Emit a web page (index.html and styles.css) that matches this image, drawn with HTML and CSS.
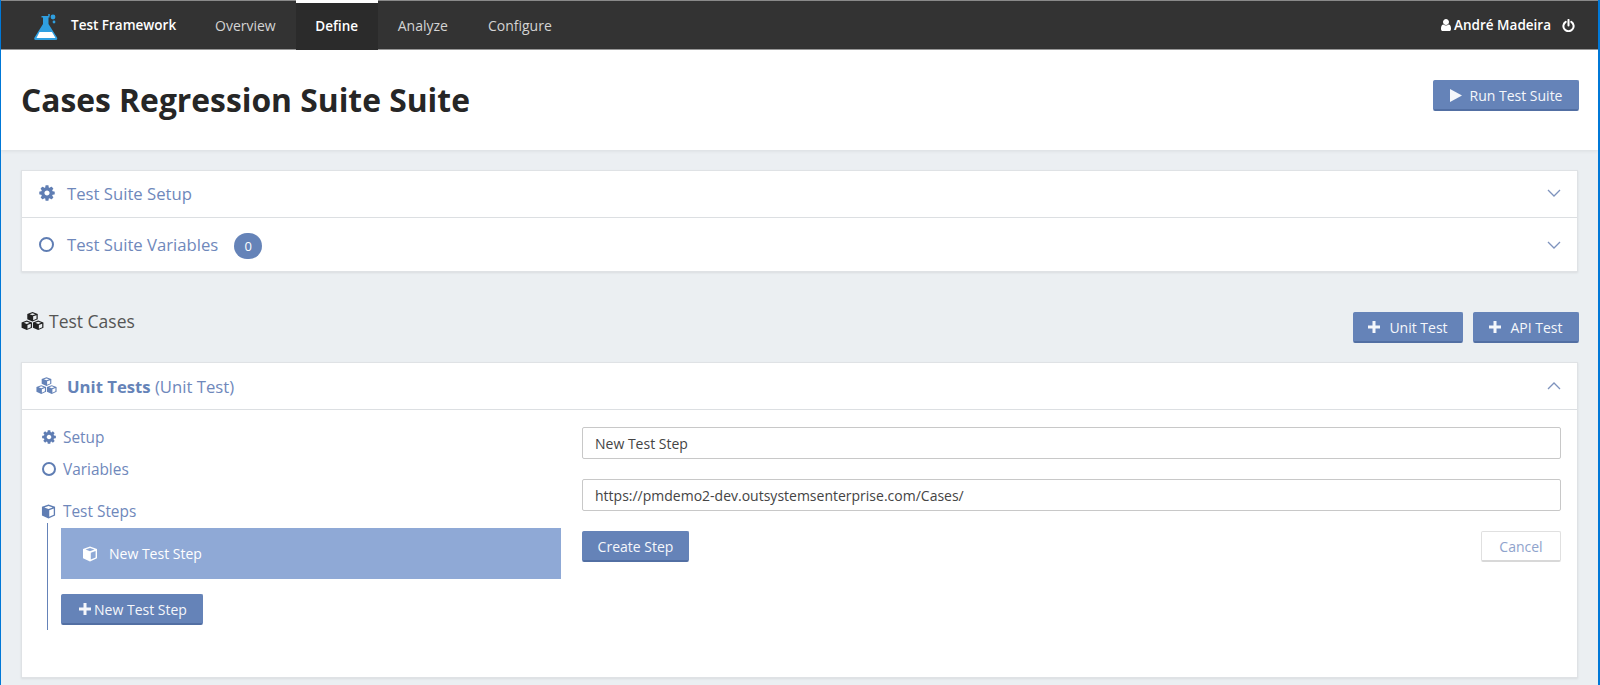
FILE: index.html
```html
<!DOCTYPE html>
<html lang="en">
<head>
<meta charset="utf-8">
<title>Cases Regression Suite Suite</title>
<link rel="stylesheet" href="styles.css">
</head>
<body>
<svg class="defs" aria-hidden="true">
  <symbol id="i-cog" viewBox="0 0 1792 1792"><path fill="currentColor" d="M1152 896q0-106-75-181t-181-75-181 75-75 181 75 181 181 75 181-75 75-181zm512-109v222q0 12-8 23t-20 13l-185 28q-19 54-39 91 35 50 107 138 10 12 10 25t-9 23q-27 37-99 108t-94 71q-12 0-26-9l-138-108q-44 23-91 38-16 136-29 186-7 28-36 28h-222q-14 0-24.500-8.500t-11.500-21.500l-28-184q-49-16-90-37l-141 107q-10 9-25 9-14 0-25-11-126-114-165-168-7-10-7-23 0-12 8-23 15-21 51-66.500t54-70.500q-27-50-41-99l-183-27q-13-2-21-12.500t-8-23.500v-222q0-12 8-23t19-13l186-28q14-46 39-92-40-57-107-138-10-12-10-24 0-10 9-23 26-36 98.500-107.500t94.500-71.500q13 0 26 10l138 107q44-23 91-38 16-136 29-186 7-28 36-28h222q14 0 24.500 8.500t11.500 21.500l28 184q49 16 90 37l142-107q9-9 24-9 13 0 25 10 129 119 165 170 7 8 7 22 0 12-8 23-15 21-51 66.500t-54 70.500q26 50 41 98l183 28q13 2 21 12.500t8 23.500z"/></symbol>
  <symbol id="i-user" viewBox="0 0 1792 1792"><path fill="currentColor" d="M1536 1399q0 109-62.500 187t-150.500 78h-854q-88 0-150.500-78t-62.500-187q0-85 8.500-160.500t31.500-151.500 58.500-130 94-88.500 134.500-34.500q131 128 313 128t313-128q76 0 134.500 34.500t94 88.500 58.500 130 31.500 151.500 8.500 160.500zm-256-887q0 159-112.500 271.500t-271.500 112.500-271.500-112.500-112.500-271.500 112.500-271.500 271.500-112.500 271.500 112.500 112.500 271.500z"/></symbol>
  <symbol id="i-cube" viewBox="0 0 16 16"><path fill="currentColor" fill-rule="evenodd" d="M8 .5 15 3v9.300L8 15.500 1 12.300V3zM8 2 3.500 3.600 8 5.300l4.500-1.700zM8.800 6.700v6.900l4.800-2.200V4.900z"/></symbol>
  <symbol id="i-cubes" viewBox="0 0 24 20"><g fill="currentColor" fill-rule="evenodd"><path d="M12 0l5.500 2v5.500L12 10 6.500 7.500V2zM12 1.300 9 2.400l3 1.100 3-1.100zM12.700 4.600v4l3.500-1.600V3.300z"/><path d="M6 9l5.500 2v5.500L6 19 .5 16.500V11zM6 10.300 3 11.400l3 1.100 3-1.100zM6.700 13.600v4l3.500-1.600v-3.700z"/><path d="M18 9l5.500 2v5.500L18 19l-5.500-2.500V11zM18 10.300l-3 1.100 3 1.100 3-1.100zM18.700 13.600v4l3.500-1.600v-3.700z"/></g></symbol>
  <symbol id="i-plus" viewBox="0 0 12 12"><path fill="currentColor" d="M4.500 0h3v4.500H12v3H7.500V12h-3V7.500H0v-3h4.500z"/></symbol>
  <symbol id="i-chev" viewBox="0 0 14 8"><path fill="none" stroke="currentColor" stroke-width="1.300" d="M1 1l6 6 6-6"/></symbol>
</svg>

<header class="topbar">
  <a class="brand">
    <svg class="logo" viewBox="0 0 24 26" aria-hidden="true">
      <circle cx="19" cy="3" r="2.400" fill="#2f9fe0"/><circle cx="20" cy="8" r="1.400" fill="#2f9fe0"/><circle cx="15" cy="1" r="1" fill="#2f9fe0"/>
      <path fill="#2f9fe0" d="M7.500 2h8v1.500h-1V10l8.500 13.500q1 2.500-1.500 2.500H2q-2.500 0-1.500-2.500L9 10V3.500H7.500z"/>
      <path fill="#fff" d="M5.500 18h12.500l3.500 6H2.500z"/>
    </svg>
    <span>Test Framework</span>
  </a>
  <nav class="nav">
    <a class="nav-item">Overview</a>
    <a class="nav-item active">Define</a>
    <a class="nav-item">Analyze</a>
    <a class="nav-item">Configure</a>
  </nav>
  <div class="account">
    <svg class="ic-user"><use href="#i-user"/></svg>
    <span>André Madeira</span>
    <svg class="ic-power" viewBox="0 0 14 14" aria-hidden="true"><path fill="none" stroke="#fff" stroke-width="2.200" stroke-linecap="round" d="M4 3a5.500 5.500 0 1 0 6 0M7 1v6"/></svg>
  </div>
</header>

<section class="titlebar">
  <h1>Cases Regression Suite Suite</h1>
  <button class="btn btn-run">
    <svg class="ic-play" viewBox="0 0 12 13" aria-hidden="true"><path fill="currentColor" d="M0 0l12 6.500L0 13z"/></svg>
    Run Test Suite
  </button>
</section>

<main class="content">
  <div class="card">
    <div class="row row-setup">
      <svg class="ic-lead"><use href="#i-cog"/></svg>
      <span class="row-title">Test Suite Setup</span>
      <svg class="chev"><use href="#i-chev"/></svg>
    </div>
    <div class="row row-vars">
      <span class="ring"></span>
      <span class="row-title">Test Suite Variables</span>
      <span class="badge">0</span>
      <svg class="chev"><use href="#i-chev"/></svg>
    </div>
  </div>

  <div class="section-head">
    <h2><svg class="ic-cubes-dark"><use href="#i-cubes"/></svg>Test Cases</h2>
    <div class="actions">
      <button class="btn btn-unit"><svg class="ic-plus"><use href="#i-plus"/></svg>Unit Test</button>
      <button class="btn btn-api"><svg class="ic-plus"><use href="#i-plus"/></svg>API Test</button>
    </div>
  </div>

  <div class="card panel">
    <div class="row row-unit">
      <svg class="ic-cubes"><use href="#i-cubes"/></svg>
      <span class="row-title"><b>Unit Tests</b> (Unit Test)</span>
      <svg class="chev up"><use href="#i-chev"/></svg>
    </div>
    <div class="panel-body">
      <aside class="side">
        <a class="side-link"><svg class="ic-side"><use href="#i-cog"/></svg>Setup</a>
        <a class="side-link"><span class="ring small"></span>Variables</a>
        <a class="side-link steps"><svg class="ic-side cube"><use href="#i-cube"/></svg>Test Steps</a>
        <div class="tree">
          <div class="step"><svg class="ic-step"><use href="#i-cube"/></svg>New Test Step</div>
          <button class="btn btn-new"><svg class="ic-plus small"><use href="#i-plus"/></svg>New Test Step</button>
        </div>
      </aside>
      <form class="form">
        <input class="field" type="text" value="New Test Step">
        <input class="field" type="text" value="https://pmdemo2-dev.outsystemsenterprise.com/Cases/">
        <div class="form-actions">
          <button class="btn btn-create" type="button">Create Step</button>
          <button class="btn-cancel" type="button">Cancel</button>
        </div>
      </form>
    </div>
  </div>
</main>
</body>
</html>
```
FILE: styles.css
```css
* { box-sizing: border-box; }
html, body { margin: 0; height: 100%; }
body {
  height: 685px;
  overflow: hidden;
  background: #ebeff2;
  border-left: 1px solid #0078d7;
  border-right: 2px solid #0078d7;
  font-family: "Open Sans", sans-serif;
  font-size: 14px;
  color: #2b2b2b;
}
.defs { width: 0; height: 0; position: absolute; }

.topbar {
  height: 50px;
  background: #333;
  border-top: 1px solid #8a8a8a;
  border-bottom: 1px solid #9a9a9a;
  display: flex;
  align-items: center;
  padding-left: 33px;
  color: #fff;
}
.brand { display: flex; align-items: center; gap: 13px; font-weight: 600; font-size: 13.500px; width: 162px; }
.logo { width: 24px; height: 26px; margin-top: 4px; }
.nav { display: flex; height: 100%; margin-left: -1px; }
.nav-item {
  display: flex;
  align-items: center;
  padding: 0 20px;
  color: #d4d4d4;
  font-size: 14px;
}
.nav-item.active {
  width: 82px;
  height: 50px;
  margin-top: -1px;
  padding: 0 0 2px;
  justify-content: center;
  background: #2b2b2b;
  border-top: 3px solid #fff;
  color: #fff;
  font-weight: 600;
  font-size: 13.500px;
}
.account { margin-left: auto; display: flex; align-items: center; font-weight: 600; font-size: 13.500px; padding-right: 23px; }
.ic-user { width: 14px; height: 14px; color: #fff; margin-right: 1px; }
.ic-power { width: 13px; height: 13px; margin-left: 11px; }

.titlebar {
  height: 100px;
  background: #fff;
  display: flex;
  align-items: flex-start;
  justify-content: space-between;
  padding: 30px 19px 0 20px;
  box-shadow: 0 1px 4px rgba(0, 0, 0, .08);
}
h1 { margin: 0; font-size: 31.800px; font-weight: 700; line-height: 40px; color: #262626; }

.btn {
  display: inline-flex;
  align-items: center;
  justify-content: center;
  height: 31px;
  background: #6583b8;
  color: #f5f7fb;
  border: 1px solid #6583b8;
  border-bottom: 2px solid #526fa3;
  border-radius: 2px;
  font-family: inherit;
  font-size: 14px;
  font-weight: 400;
  padding: 0;
}
.btn-run { width: 146px; }
.ic-play { width: 12px; height: 13px; margin-right: 8px; }

.content { padding: 20px 20px 0 20px; }
.card { background: #fff; border: 1px solid #dfe2e5; box-shadow: 0 1px 2px rgba(0, 0, 0, .08); }
.row { display: flex; align-items: center; padding: 0 16px 0 17px; color: #6f88bb; font-size: 16.700px; }
.row-setup { height: 47px; padding-bottom: 2px; border-bottom: 1px solid #dcdfe2; }
.row-vars { height: 53px; }
.row-unit { height: 47px; border-bottom: 1px solid #dcdfe2; padding-left: 14px; }
.row-title { margin-left: 13px; }
.row-unit .row-title { margin-left: 10px; }
.row-setup .row-title { margin-left: 11px; }
.row-title b { font-weight: 700; color: #6583b8; }
.ic-lead { width: 18px; height: 18px; margin-left: -1px; color: #5f7db3; }
.ring { width: 15px; height: 15px; border: 2px solid #5f7db3; border-radius: 50%; flex: none; }
.ring.small { width: 14px; height: 14px; }
.badge {
  margin: 2px 0 0 16px;
  width: 28px;
  height: 26px;
  border-radius: 13px;
  background: #6583b8;
  color: #fff;
  font-size: 13px;
  display: flex;
  align-items: center;
  justify-content: center;
}
.chev { width: 14px; height: 8px; margin-left: auto; color: #7e93bd; }
.chev.up { transform: rotate(180deg); }

.section-head { display: flex; justify-content: space-between; align-items: flex-start; margin-top: 40px; height: 50px; }
h2 { margin: -3px 0 0; font-size: 17.500px; font-weight: 400; color: #555; display: flex; align-items: center; line-height: 24px; }
.ic-cubes-dark { width: 23px; height: 19px; color: #222; margin-right: 5px; }
.actions { display: flex; gap: 10px; margin-right: -1px; }
.btn-unit { width: 110px; }
.btn-api { width: 106px; }
.ic-plus { width: 12px; height: 12px; margin-right: 9px; }
.ic-plus.small { margin-right: 3px; }

.panel { height: 316px; }
.ic-cubes { width: 21px; height: 18px; color: #6583b8; }
.panel-body { display: flex; padding: 17px 16px 0 15px; }
.side { width: 524px; flex: none; }
.side-link { display: flex; align-items: center; color: #6f88bb; font-size: 15.400px; height: 20px; margin: 0 0 12px 4px; }
.side-link.steps { margin-top: 22px; margin-bottom: 7px; }
.ic-side { width: 16px; height: 16px; margin-left: 0; color: #5f7db3; margin-right: 6px; flex: none; }
.side-link .ring { margin: 0 7px 0 1px; }
.ic-side.cube { width: 15px; height: 15px; margin-right: 7px; }
.tree { margin: -5px 0 0 10px; border-left: 1px solid #6583b8; padding: 5px 0 0 13px; height: 107px; }
.step {
  height: 51px;
  background: #8fa9d6;
  color: #fff;
  display: flex;
  align-items: center;
  padding-left: 21px;
  font-size: 14px;
  font-weight: 400;
}
.ic-step { width: 16px; height: 16px; color: #fff; margin-right: 11px; }
.btn-new { width: 142px; margin-top: 15px; padding-left: 2px; }

.form { flex: 1; display: flex; flex-direction: column; padding-left: 21px; }
.field {
  height: 32px;
  margin-bottom: 20px;
  border: 1px solid #c8c8c8;
  border-radius: 2px;
  padding: 0 12px;
  font-family: inherit;
  font-size: 14px;
  color: #444;
  width: 100%;
}
.form-actions { display: flex; justify-content: space-between; align-items: flex-start; }
.btn-create { width: 107px; }
.btn-cancel {
  width: 80px;
  height: 31px;
  background: #fff;
  border: 1px solid #e0e0e0;
  border-bottom: 2px solid #d8d8d8;
  border-radius: 2px;
  color: #8fa3cc;
  font-family: inherit;
  font-size: 14px;
  padding: 0;
}
```
